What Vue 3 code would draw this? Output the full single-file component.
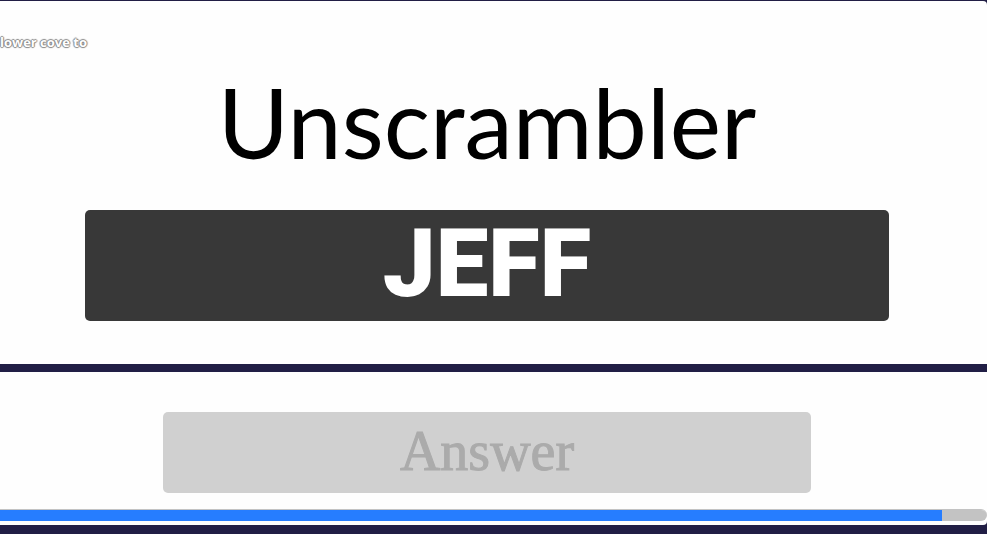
<template>
  <main class="game">
    <section class="card puzzle">
      <span class="chat-message">lower cove to</span>
      <h1>Unscrambler</h1>
      <div class="word">{{ word }}</div>
    </section>
    <section class="card reply">
      <input
        v-model="answer"
        class="answer"
        type="text"
        name="answer"
        placeholder="Answer"
        aria-label="Answer"
        autocomplete="off"
      />
      <progress :value="timeLeft" max="1000" aria-label="Time left"></progress>
    </section>
  </main>
</template>

<script setup>
import { ref } from "vue";

const word = ref("JEFF");
const answer = ref("");
const timeLeft = ref(954);
</script>

<style>
body {
  margin: 0;
  background: #211e45;
}
</style>

<style scoped>
.game {
  display: flex;
  flex-direction: column;
  gap: 8px;
  padding: 1px 0 8px;
  overflow: hidden;
}

.card {
  position: relative;
  display: flex;
  flex-direction: column;
  align-items: center;
  box-sizing: border-box;
  background: #fefefe;
}

.puzzle {
  padding: 61px 13px 43px 0;
  border-radius: 0 4px 0 0;
}

.chat-message {
  position: absolute;
  top: 31px;
  left: 0;
  color: #fff;
  font: bold 13px/20px "Open Sans", sans-serif;
  white-space: nowrap;
  text-shadow: 1px 0 1px #888, -1px 0 1px #888, 0 1px 1px #888, 0 -1px 1px #888;
}

h1 {
  margin: 0 0 28px;
  color: #000;
  font: 400 97px/120px Lato, sans-serif;
}

.word {
  box-sizing: border-box;
  width: 82.5%;
  padding-bottom: 2px;
  border-radius: 5px;
  background: #383838;
  color: #fff;
  font: 900 94px/109px Roboto, sans-serif;
  text-align: center;
}

.reply {
  padding-top: 40px;
  padding-bottom: 4px;
  border-radius: 0 0 4px 0;
}

.answer {
  box-sizing: border-box;
  width: 65.6%;
  height: 81px;
  margin: 0 13px 16px 0;
  padding: 0 8px 4px;
  border: 0;
  border-radius: 5px;
  background: #d0d0d0;
  color: #383838;
  font: 400 56px/76px "Liberation Serif", serif;
  text-align: center;
  -webkit-text-stroke: 1px;
}

.answer::placeholder {
  color: #ababab;
}

.answer:focus {
  outline: 2px solid #267dff;
}

progress {
  display: block;
  box-sizing: border-box;
  width: 100%;
  height: 12px;
  border: 0;
  border-top: 1px solid #c3c3c3;
  border-radius: 0 6px 6px 0;
  overflow: hidden;
  background: #c3c3c3;
  appearance: none;
}

progress::-webkit-progress-bar {
  background: #c3c3c3;
}

progress::-webkit-progress-value {
  background: #267dff;
}
</style>
